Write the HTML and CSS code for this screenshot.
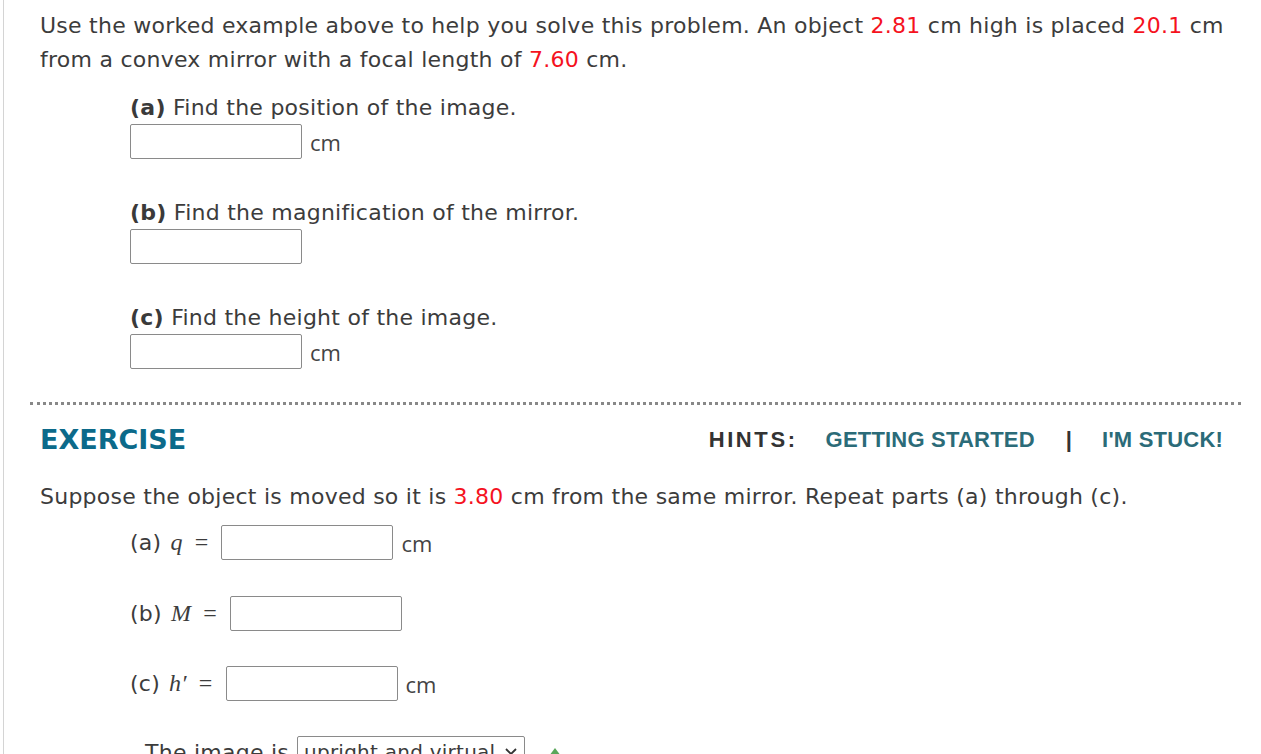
FILE: index.html
```html
<!DOCTYPE html>
<html>
<head>
<meta charset="utf-8">
<link rel="stylesheet" href="styles.css">
</head>
<body>
<div class="page">
  <p class="intro">Use the worked example above to help you solve this problem. An object <span class="red">2.81</span> cm high is placed <span class="red">20.1</span> cm from a convex mirror with a focal length of <span class="red">7.60</span> cm.</p>
  <div class="part">
    <div class="q"><b>(a)</b> Find the position of the image.</div>
    <div class="ansrow"><span class="box"></span><span class="unit">cm</span></div>
  </div>
  <div class="part">
    <div class="q"><b>(b)</b> Find the magnification of the mirror.</div>
    <div class="ansrow"><span class="box"></span></div>
  </div>
  <div class="part">
    <div class="q"><b>(c)</b> Find the height of the image.</div>
    <div class="ansrow"><span class="box"></span><span class="unit">cm</span></div>
  </div>
  <div class="divider"></div>
  <div class="exhead">
    <h2 class="extitle">EXERCISE</h2>
    <div class="hints"><span class="hl">HINTS:</span><span class="hlink">GETTING STARTED</span><span class="sep">|</span><span class="hlink">I'M STUCK!</span></div>
  </div>
  <p class="intro2">Suppose the object is moved so it is <span class="red">3.80</span> cm from the same mirror. Repeat parts (a) through (c).</p>
  <div class="eq eq-a">(a) <i class="m">q</i> <span class="eqs">=</span><span class="box"></span><span class="unit">cm</span></div>
  <div class="eq eq-b">(b) <i class="m">M</i> <span class="eqs">=</span><span class="box"></span></div>
  <div class="eq eq-c">(c) <i class="m">h′</i> <span class="eqs">=</span><span class="box"></span><span class="unit">cm</span></div>
  <div class="sel-row">The image is <span class="select">upright and virtual <svg width="14" height="10" viewBox="0 0 14 10"><path d="M2 2 L7 7 L12 2" fill="none" stroke="#333" stroke-width="1.8"/></svg></span><svg class="tri" width="16" height="12" viewBox="0 0 16 12"><path d="M8 2 L14 10 L2 10 Z" fill="#5aa65a"/></svg></div>
</div>
</body>
</html>
```

FILE: styles.css
```css
html, body {
  margin: 0;
  padding: 0;
  background: #fff;
  overflow: hidden;
}
body {
  font-family: Verdana, "DejaVu Sans", sans-serif;
  font-size: 22px;
  letter-spacing: 0.25px;
  color: #3c3c3c;
}
.page {
  margin-left: 3px;
  border-left: 1px solid #d4d4d4;
  padding-left: 36px;
  padding-right: 20px;
  min-height: 754px;
}
.red { color: #f5121e; }
.intro {
  margin: 0;
  padding-top: 9px;
  line-height: 34px;
}
.part {
  margin-left: 90px;
  margin-top: 16px;
}
.part + .part { margin-top: 39px; }
.q { line-height: 30px; }
.q b { color: #3a3a3a; }
.ansrow {
  display: flex;
  align-items: center;
  margin-top: 1px;
}
.box {
  display: inline-block;
  width: 170px;
  height: 33px;
  border: 1px solid #8a8a8a;
  border-radius: 2px;
  background: #fff;
}
.unit {
  font-family: "Open Sans", sans-serif;
  font-size: 22px;
  letter-spacing: 0;
  margin-left: 8px;
  color: #444;
}
.divider {
  margin-left: -10px;
  margin-top: 33px;
  border-top: 3px dotted #888;
  height: 0;
}
.exhead {
  display: flex;
  justify-content: space-between;
  align-items: center;
  margin-top: 19px;
  padding-right: 18px;
}
.extitle {
  margin: 0;
  font-size: 27px;
  font-weight: bold;
  color: #0c6a8a;
  letter-spacing: 0;
}
.hints {
  font-family: "Liberation Sans", Arial, sans-serif;
  font-weight: bold;
  font-size: 22px;
  letter-spacing: 0.2px;
  display: flex;
  align-items: center;
}
.hl { color: #333; margin-right: 28px; letter-spacing: 2.6px; }
.hlink { color: #2b6b78; }
.sep { color: #333; margin: 0 30px 0 31px; }
.intro2 {
  margin: 27px 0 0 0;
  line-height: 30px;
}
.eq {
  display: flex;
  align-items: center;
  margin-left: 90px;
}
.eq-a { margin-top: 13px; }
.eq-b { margin-top: 36px; }
.eq-c { margin-top: 35px; }
.m {
  font-family: "Liberation Serif", "DejaVu Serif", serif;
  font-size: 24px;
  margin-left: 9px;
}
.eqs {
  font-family: "Liberation Serif", serif;
  font-size: 24px;
  margin: 0 13px 0 12px;
}
.sel-row {
  margin-left: 105px;
  margin-top: 35px;
  display: flex;
  align-items: center;
}
.select {
  display: inline-flex;
  align-items: center;
  justify-content: space-between;
  margin-left: 8px;
  width: 214px;
  height: 30px;
  padding: 0 6px;
  border: 1px solid #8a8a8a;
  border-radius: 2px;
  font-size: 20px;
}
.tri { margin-left: 22px; }
```
